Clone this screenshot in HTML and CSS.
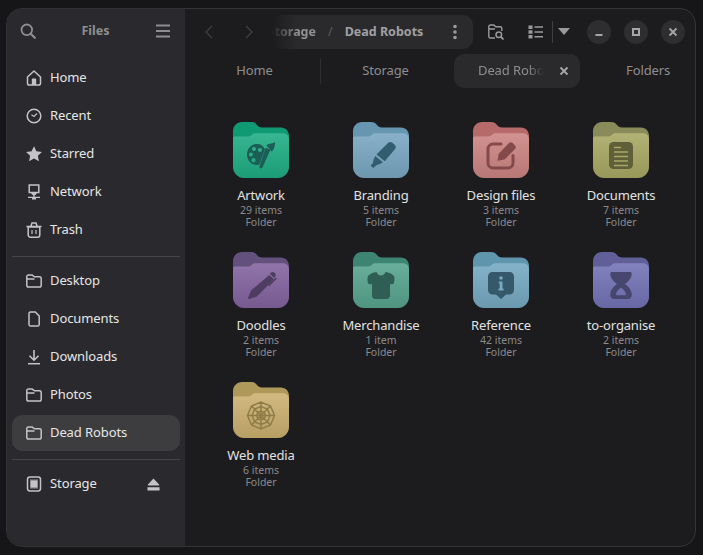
FILE: index.html
```html
<!DOCTYPE html>
<html lang="en">
<head>
<meta charset="utf-8">
<title>Files</title>
<link rel="stylesheet" href="styles.css">
</head>
<body>
<svg class="defs" width="0" height="0" aria-hidden="true">
  <defs>
    <linearGradient id="shade" x1="0" y1="0" x2="0" y2="1">
      <stop offset="0" stop-color="#fff" stop-opacity=".11"/>
      <stop offset="1" stop-color="#000" stop-opacity=".1"/>
    </linearGradient>
    <symbol id="folder" viewBox="0 0 56 56">
      <path class="f-back" d="M9 0h9c3 0 4.500 1 6 3c1.200 1.600 2.500 2.500 5 2.500h19c4.400 0 8 3.600 8 8v14H0V9c0-5 4-9 9-9z"/>
      <path class="f-front" d="M22 11.200h28c3.300 0 6 2.700 6 6V45c0 6-5 11-11 11H11C5 56 0 51 0 45V16.400c0-1 .8-1.800 1.800-1.800H14c2.600 0 4-.8 5-1.900 1-1 1.800-1.500 3-1.500z"/>
      <path fill="url(#shade)" d="M22 11.200h28c3.300 0 6 2.700 6 6V45c0 6-5 11-11 11H11C5 56 0 51 0 45V16.400c0-1 .8-1.800 1.800-1.800H14c2.600 0 4-.8 5-1.900 1-1 1.800-1.500 3-1.500z"/>
    </symbol>
    <symbol id="i-folder" viewBox="0 0 16 16">
      <path fill="none" stroke="currentColor" stroke-width="1.500" d="M2.500 2h3.200c.9 0 1.200.4 1.700 1 .4.500.7.800 1.500.8h4.600c.9 0 1.700.8 1.700 1.700v6.700c0 1-.8 1.800-1.800 1.800H2.600c-1 0-1.800-.8-1.800-1.800V3.500C.8 2.700 1.500 2 2.500 2zM1 6h7.500"/>
    </symbol>
  </defs>
</svg>
<div class="window">
  <aside class="sidebar">
    <header class="side-head">
      <svg class="head-icon" viewBox="0 0 16 16"><circle cx="6.800" cy="6.800" r="5.300" fill="none" stroke="currentColor" stroke-width="1.800"/><path d="M10.800 10.800l4 4" stroke="currentColor" stroke-width="2.200" stroke-linecap="round"/></svg>
      <span class="side-title">Files</span>
      <svg class="head-icon" viewBox="0 0 16 16"><path d="M1 2.500h14M1 8h14M1 13.500h14" stroke="currentColor" stroke-width="1.800"/></svg>
    </header>
    <nav class="places">
      <a class="place"><svg class="place-icon" viewBox="0 0 16 16"><path fill="none" stroke="currentColor" stroke-width="1.500" stroke-linejoin="round" d="M1.500 7L8 1l6.500 6v6.200c0 1-.8 1.800-1.800 1.800H3.300c-1 0-1.800-.8-1.800-1.800z"/><path fill="currentColor" d="M5.800 15V9.500c0-.6.400-1 1-1h2.400c.6 0 1 .4 1 1V15z"/></svg>Home</a>
      <a class="place"><svg class="place-icon" viewBox="0 0 16 16"><circle cx="8" cy="8" r="6.800" fill="none" stroke="currentColor" stroke-width="1.500"/><path fill="none" stroke="currentColor" stroke-width="1.200" d="M5.500 6.800L8 8.500l3-3"/></svg>Recent</a>
      <a class="place"><svg class="place-icon" viewBox="0 0 16 16"><path fill="currentColor" d="M8 .2l2.400 5 5.500.7-4 3.800 1 5.500L8 12.500l-4.900 2.700 1-5.500-4-3.800 5.500-.7z"/></svg>Starred</a>
      <a class="place"><svg class="place-icon" viewBox="0 0 16 16"><path fill="none" stroke="currentColor" stroke-width="1.500" d="M3.200 1h9.600v7.500H3.200z"/><path fill="currentColor" d="M5 9h6l-1.500 2h-3zM7.300 11h1.400v2H7.300zM2 12.700h12V14H2zM6 14h4v1.500H6z"/></svg>Network</a>
      <a class="place"><svg class="place-icon" viewBox="0 0 16 16"><path fill="none" stroke="currentColor" stroke-width="1.500" d="M2.200 5h11.600v8c0 1.200-1 2.200-2.200 2.200H4.400c-1.200 0-2.200-1-2.200-2.200zM.5 4.500h15M5 4l1-3h4l1 3"/><path stroke="currentColor" stroke-width="1.200" d="M6 8v4M10 8v4"/></svg>Trash</a>
      <hr class="rule">
      <a class="place"><svg class="place-icon"><use href="#i-folder"/></svg>Desktop</a>
      <a class="place"><svg class="place-icon" viewBox="0 0 16 16"><path fill="none" stroke="currentColor" stroke-width="1.500" stroke-linejoin="round" d="M3 2.500c0-.9.700-1.600 1.600-1.600h4.700L13.200 5v8.500c0 .9-.7 1.600-1.600 1.600H4.600c-.9 0-1.600-.7-1.600-1.600z"/></svg>Documents</a>
      <a class="place"><svg class="place-icon" viewBox="0 0 16 16"><path fill="none" stroke="currentColor" stroke-width="1.600" d="M8 1v9.500M3.500 6.800L8 11.200l4.500-4.400"/><path d="M2 14.700h12" stroke="currentColor" stroke-width="1.500"/></svg>Downloads</a>
      <a class="place"><svg class="place-icon"><use href="#i-folder"/></svg>Photos</a>
      <a class="place active"><svg class="place-icon"><use href="#i-folder"/></svg>Dead Robots</a>
      <hr class="rule">
      <a class="place"><svg class="place-icon" viewBox="0 0 16 16"><rect x="1.500" y="1" width="13" height="14" rx="2.400" fill="none" stroke="currentColor" stroke-width="1.500"/><path fill="currentColor" d="M4.300 4.300h7.400v7.400H4.300z"/><path fill="none" stroke="currentColor" stroke-width="1" stroke-dasharray="1 1" d="M4.500 3.800h7M4.500 12.200h7"/></svg>Storage<svg class="eject" viewBox="0 0 14 14"><path fill="currentColor" d="M7 .5l6 6.500c.4.500.2 1-.5 1h-11c-.7 0-.9-.5-.5-1zM.5 10h13v3.500H.5z"/></svg></a>
    </nav>
  </aside>
  <main class="main">
    <header class="toolbar">
      <div class="nav-arrows">
        <svg class="chev" viewBox="0 0 10 16"><path d="M8 2L2 8l6 6" fill="none" stroke="currentColor" stroke-width="1.500"/></svg>
        <svg class="chev" viewBox="0 0 10 16"><path d="M2 2l6 6-6 6" fill="none" stroke="currentColor" stroke-width="1.500"/></svg>
      </div>
      <div class="pathbar">
        <span class="crumb-clip"><span class="crumb">Storage</span></span>
        <span class="slash">/</span>
        <span class="crumb current">Dead Robots</span>
        <svg class="kebab" viewBox="0 0 4 16"><circle cx="2" cy="2.500" r="1.800"/><circle cx="2" cy="8" r="1.800"/><circle cx="2" cy="13.500" r="1.800"/></svg>
      </div>
      <svg class="tool search-folder" viewBox="0 0 16 16"><path fill="none" stroke="currentColor" stroke-width="1.400" d="M7 14H2.400C1.500 14 .8 13.300.8 12.400V2.600C.8 1.700 1.500 1 2.400 1h3c.8 0 1.100.4 1.500 1 .3.400.6.700 1.300.7h4c.9 0 1.600.7 1.600 1.600V7M1 5h6"/><circle cx="10.800" cy="10.800" r="2.800" fill="none" stroke="currentColor" stroke-width="1.500"/><path d="M13 13l2.500 2.500" stroke="currentColor" stroke-width="1.800"/></svg>
      <svg class="tool list" viewBox="0 0 16 16"><path fill="currentColor" d="M.5 1.500h4v3.400h-4zM.5 6.300h4v3.400h-4zM.5 11.100h4v3.400h-4zM6.500 2.300H15v1.500H6.500zM6.500 7.300H15v1.500H6.500zM6.500 12.100H15v1.500H6.500z"/></svg>
      <span class="tool-sep"></span>
      <svg class="caret" viewBox="0 0 12 7"><path fill="currentColor" d="M0 0h12L6 7z"/></svg>
      <div class="winbtns">
        <span class="winbtn"><svg viewBox="0 0 10 10"><path d="M1.500 8h7" stroke="currentColor" stroke-width="1.800"/></svg></span>
        <span class="winbtn"><svg viewBox="0 0 10 10"><path fill="none" stroke="currentColor" stroke-width="2" d="M2 2h6v6H2z"/></svg></span>
        <span class="winbtn"><svg viewBox="0 0 10 10"><path d="M1.500 1.500l7 7M8.500 1.500l-7 7" stroke="currentColor" stroke-width="1.800"/></svg></span>
      </div>
    </header>
    <div class="tabs">
      <span class="tab tab-home">Home</span>
      <span class="tab-sep"></span>
      <span class="tab tab-storage">Storage</span>
      <span class="tab tab-active"><span class="tab-label">Dead Robots</span><svg class="tab-x" viewBox="0 0 10 10"><path d="M1.500 1.500l7 7M8.500 1.500l-7 7" stroke="currentColor" stroke-width="1.900"/></svg></span>
      <span class="tab tab-folders">Folders</span>
    </div>
    <section class="grid">
      <article class="item teal">
        <svg class="folder" viewBox="0 0 56 56"><use href="#folder"/><g class="mark"><path class="glyph" fill-rule="evenodd" d="M24 19.500c-5.500 0-10 4.500-10 10.500 0 6 4.500 10.500 10 10.500 1.500 0 2.500-.7 2.900-1.800L32 25c-1.300-3.500-4-5.500-8-5.500z M21 22.500a2 2 0 1 1-.1 0z M27 23.500a2 2 0 1 1-.1 0z M18 28a2 2 0 1 1-.1 0z M20.500 33.500a2.200 2.200 0 1 1-.1 0z"/><path class="glyph" d="M33.500 21c1.500-2.500 5.500-1 8.500-3.500 0 3.500-.5 7.500-3.500 9.500zM32.800 23l4.500 2.500-7.800 17.500c-.7 1.600-3.500.8-3.200-1z"/></g></svg>
        <h2>Artwork</h2><p>29 items</p><p>Folder</p>
      </article>
      <article class="item sky">
        <svg class="folder" viewBox="0 0 56 56"><use href="#folder"/><g class="mark"><path class="glyph" d="M35 18.500c1.200-1.200 3-1.200 4.300-.2l2.300 1.900c1.300 1.200 1.500 3 .4 4.400L31.800 36.800l-8.300-6.700z"/><path class="glyph" d="M22.200 31.500l7.700 6.300-3 1.700-3.500 1.200-3 2.800-2.700-2.200 2.300-3 .6-3.300z"/></g></svg>
        <h2>Branding</h2><p>5 items</p><p>Folder</p>
      </article>
      <article class="item rose">
        <svg class="folder" viewBox="0 0 56 56"><use href="#folder"/><g class="mark"><path class="glyph-line" d="M28 19.500h-8c-2.800 0-5 2.200-5 5v14c0 2.800 2.200 5 5 5h15c2.800 0 5-2.200 5-5V31"/><path class="glyph" d="M36 18.500c1-1 2.600-1 3.600 0l2.400 2.500c1 1 1 2.500 0 3.500L31.500 35l-7 1.200 1.200-7z"/></g></svg>
        <h2>Design files</h2><p>3 items</p><p>Folder</p>
      </article>
      <article class="item olive">
        <svg class="folder" viewBox="0 0 56 56"><use href="#folder"/><g class="mark"><rect class="glyph" x="16" y="17.500" width="24" height="27" rx="4.500"/><path class="glyph-gap" d="M21 23h7M21 27.500h14M21 32h14M21 36.500h14M21 41h14"/></g></svg>
        <h2>Documents</h2><p>7 items</p><p>Folder</p>
      </article>
      <article class="item plum">
        <svg class="folder" viewBox="0 0 56 56"><use href="#folder"/><g class="mark"><path class="glyph" d="M36.300 20.500l4.700 4.300L23.800 42l-7.200 2.500c-1 .3-1.700-.4-1.400-1.400L18 36z"/><path class="glyph" d="M37.500 18.500c1.300-1.200 3-1.200 4.300 0 1.200 1.200 1.200 3 0 4.300l-.7.700-4.300-4.300z"/><path class="glyph-line thin" d="M43 24l-7 7"/></g></svg>
        <h2>Doodles</h2><p>2 items</p><p>Folder</p>
      </article>
      <article class="item jade">
        <svg class="folder" viewBox="0 0 56 56"><use href="#folder"/><g class="mark"><path class="glyph" d="M23.500 17.500c.8 2.300 2.300 3.500 4.500 3.500s3.700-1.200 4.500-3.500c3.500.6 6 1.800 8 3.500 1.300 1.200 1.200 5 .5 7.500-.4 1.200-2.500 1.500-4 1V41c0 2-1.500 3.500-3.500 3.500h-11c-2 0-3.500-1.500-3.500-3.500V29.500c-1.500.5-3.600.2-4-1-.7-2.500-.8-6.300.5-7.500 2-1.700 4.500-2.900 8-3.500z"/></g></svg>
        <h2>Merchandise</h2><p>1 item</p><p>Folder</p>
      </article>
      <article class="item azure">
        <svg class="folder" viewBox="0 0 56 56"><use href="#folder"/><g class="mark"><path class="glyph" d="M19.500 17.500h17c2.500 0 4.500 2 4.500 4.500v13.500c0 2.500-2 4.500-4.500 4.500H33l-5 4.500-5-4.500h-3.500c-2.500 0-4.500-2-4.500-4.500V22c0-2.500 2-4.500 4.500-4.500z"/><circle class="glyph-fill" cx="28" cy="23.500" r="1.800"/><path class="glyph-fill" d="M25.800 27h3.700v7h1v2h-5v-2h1.200v-5h-.9z"/></g></svg>
        <h2>Reference</h2><p>42 items</p><p>Folder</p>
      </article>
      <article class="item iris">
        <svg class="folder" viewBox="0 0 56 56"><use href="#folder"/><g class="mark"><path class="glyph" fill-rule="evenodd" d="M19 17.500h18c1 0 1.700.7 1.700 1.700 0 4.500-3.500 7.800-6.700 10.300 3.200 2.500 6.700 5.800 6.700 10.300v1c0 2-1.700 3.700-3.700 3.700H21c-2 0-3.700-1.700-3.700-3.700v-1c0-4.500 3.500-7.800 6.700-10.300-3.200-2.500-6.700-5.800-6.700-10.300 0-1 .7-1.700 1.700-1.700z M28 33c-2.300 1.800-5 4.300-5 7 0 .5.300.8.800.8h8.400c.5 0 .8-.3.800-.8 0-2.700-2.700-5.200-5-7z"/></g></svg>
        <h2>to-organise</h2><p>2 items</p><p>Folder</p>
      </article>
      <article class="item sand">
        <svg class="folder" viewBox="0 0 56 56"><use href="#folder"/><g class="mark"><path class="glyph-line thin" d="M28 17.500v27M14.500 31h27M18.500 21.500l19 19M37.500 21.500l-19 19M28 17.500l-9.500 4-4 9.500 4 9.500 9.500 4 9.500-4 4-9.500-4-9.500zM28 22l-6.400 2.600L19 31l2.600 6.400L28 40l6.400-2.600L37 31l-2.600-6.400zM28 26.500l-3.200 1.300-1.300 3.200 1.300 3.200 3.200 1.300 3.200-1.300 1.300-3.200-1.300-3.200z"/></g></svg>
        <h2>Web media</h2><p>6 items</p><p>Folder</p>
      </article>
    </section>
  </main>
</div>
</body>
</html>
```

FILE: styles.css
```css
* { box-sizing: border-box; }
html, body { height: 100%; }
body {
  margin: 0;
  padding: 8px 7px 8px 6px;
  background: #161618;
  font-family: "Noto Sans", "Open Sans", sans-serif;
  font-size: 13px;
  overflow: hidden;
}
.defs { position: absolute; }
.window {
  display: flex;
  height: 100%;
  border: 1px solid #343437;
  border-radius: 16px;
  overflow: hidden;
  background: #1c1c1e;
}
.sidebar {
  flex: 0 0 178px;
  background: #2a2a2e;
  color: #e6e6e6;
}
.side-head {
  display: flex;
  align-items: center;
  justify-content: space-between;
  height: 43px;
  padding: 0 14px 0 13px;
  color: #8e8e90;
}
.head-icon { width: 16px; height: 16px; }
.side-title { font-weight: 700; font-size: 12.500px; }
.places { padding: 8px 5px 0; }
.place {
  display: flex;
  align-items: center;
  gap: 8px;
  height: 36px;
  margin-bottom: 2px;
  padding: 0 0 2px 14px;
  border-radius: 10px;
  letter-spacing: -.1px;
}
.place-icon { width: 16px; height: 16px; margin-top: 2px; color: #c4c4c6; flex: none; }
.place.active { background: #3d3d40; }
.rule {
  height: 1px;
  margin: 8px 0 6px;
  border: 0;
  background: #47474a;
}
.eject { width: 13px; height: 13px; margin: 2px 20px 0 auto; color: #c4c4c6; }
.main { flex: 1; min-width: 0; display: flex; flex-direction: column; color: #8e8e90; }
.toolbar {
  display: flex;
  align-items: center;
  height: 45px;
  flex: none;
}
.nav-arrows { display: flex; gap: 30px; margin-left: 19px; color: #3c3c3f; }
.chev { width: 10px; height: 16px; }
.pathbar {
  display: flex;
  align-items: center;
  width: 201px;
  height: 34px;
  margin-left: 18px;
  padding-right: 16px;
  border-radius: 10px;
  background: linear-gradient(90deg, #1c1c1e 0, #2a2a2c 24px);
  font-weight: 700;
  font-size: 12.500px;
  color: #929294;
  overflow: hidden;
}
.crumb-clip {
  flex: 0 0 44px;
  display: flex;
  justify-content: flex-end;
  overflow: hidden;
  -webkit-mask-image: linear-gradient(90deg, transparent 0, #000 26px);
  mask-image: linear-gradient(90deg, transparent 0, #000 26px);
}
.crumb { flex: none; white-space: nowrap; }
.slash { margin: 0 12px; font-weight: 400; color: #5d5d60; }
.current { color: #a0a0a2; }
.kebab { width: 4px; height: 16px; margin-left: auto; fill: #9a9a9c; }
.tool { width: 16px; height: 16px; color: #9a9a9c; flex: none; }
.search-folder { margin-left: 15px; }
.list { margin-left: 24px; }
.tool-sep { width: 1px; height: 22px; margin-left: 8px; background: #3f3f42; }
.caret { width: 12px; height: 7px; margin-left: 5px; color: #9a9a9c; }
.winbtns { display: flex; gap: 13px; margin-left: 17px; }
.winbtn {
  display: flex;
  align-items: center;
  justify-content: center;
  width: 24px;
  height: 24px;
  border-radius: 50%;
  background: #2e2e30;
  color: #a6a6a8;
}
.winbtn svg { width: 10px; height: 10px; }
.tabs {
  display: flex;
  align-items: center;
  height: 34px;
  flex: none;
  overflow: hidden;
}
.tab { white-space: nowrap; letter-spacing: -.1px; padding-bottom: 2px; }
.tab-home { width: 135px; padding-left: 4px; text-align: center; }
.tab-sep { width: 1px; height: 26px; background: #2e2e31; }
.tab-storage { width: 129px; text-align: center; }
.tab-active {
  display: flex;
  align-items: center;
  width: 126px;
  height: 34px;
  margin-left: 4px;
  padding: 0 11px 2px 24px;
  border-radius: 10px;
  background: #2a2a2c;
}
.tab-label {
  width: 66px;
  overflow: hidden;
  -webkit-mask-image: linear-gradient(90deg, #000 50px, transparent 66px);
  mask-image: linear-gradient(90deg, #000 50px, transparent 66px);
}
.tab-x { width: 10px; height: 10px; margin: 2px 0 0 auto; color: #a6a6a8; }
.tab-folders { margin-left: 46px; }
.grid {
  display: grid;
  grid-template-columns: repeat(4, 120px);
  grid-auto-rows: 130px;
  padding: 34px 0 0 16px;
}
.item { display: flex; flex-direction: column; align-items: center; }
.folder { width: 56px; height: 56px; margin-bottom: 9px; flex: none; }
.mark { transform: translateY(2.500px); }
.item h2 {
  margin: 0;
  font-size: 13px;
  font-weight: 400;
  line-height: 17px;
  color: #e2e2e2;
  letter-spacing: -.15px;
}
.item p {
  margin: 0;
  font-size: 10.500px;
  line-height: 12px;
  color: #8a8a8c;
}
.f-back { fill: var(--back); }
.f-front { fill: var(--front); }
.glyph { fill: var(--ink); }
.glyph-fill { fill: var(--front); }
.glyph-line { fill: none; stroke: var(--ink); stroke-width: 3; stroke-linecap: round; }
.glyph-line.thin { stroke-width: 1.500; }
.glyph-gap { fill: none; stroke: var(--front); stroke-width: 1.500; }
.teal { --back: #0f9a74; --front: #1fae84; --ink: #1c5e56; }
.sky { --back: #6796b1; --front: #7aa8c3; --ink: #325c70; }
.rose { --back: #b66a6a; --front: #cd8583; --ink: #84494a; }
.olive { --back: #8a8b5a; --front: #a9a965; --ink: #5f5f3a; }
.plum { --back: #64507d; --front: #84649f; --ink: #4d3d61; }
.jade { --back: #3d8473; --front: #57a58e; --ink: #2f5e54; }
.azure { --back: #5f96ae; --front: #76aac3; --ink: #35586a; }
.iris { --back: #605f97; --front: #7374b6; --ink: #46466f; }
.sand { --back: #ae985a; --front: #ccb170; --ink: #8f7c47; }
```
